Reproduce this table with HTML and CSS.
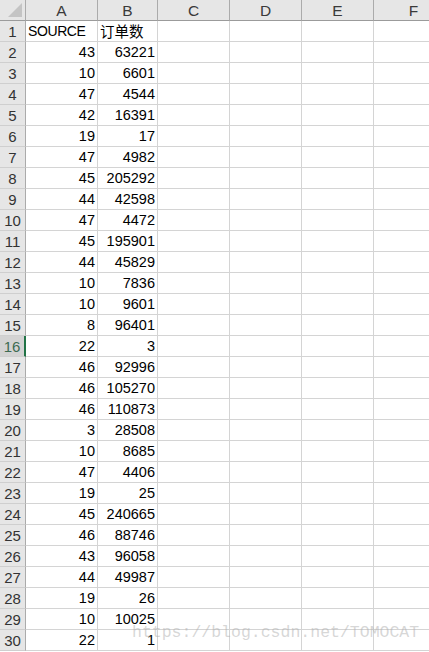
FILE: index.html
```html
<!DOCTYPE html>
<html>
<head>
<meta charset="utf-8">
<link rel="stylesheet" href="styles.css">
</head>
<body>
<div class="sheet">
  <div class="grid">
    <div class="corner"><span class="tri"></span></div>
    <div class="ch">A</div><div class="ch">B</div><div class="ch">C</div><div class="ch">D</div><div class="ch">E</div><div class="ch">F</div>

    <div class="rh">1</div><div class="c caps">SOURCE</div><div class="c cjk">订单数</div><div class="c"></div><div class="c"></div><div class="c"></div><div class="c"></div>
    <div class="rh">2</div><div class="c n">43</div><div class="c n">63221</div><div class="c"></div><div class="c"></div><div class="c"></div><div class="c"></div>
    <div class="rh">3</div><div class="c n">10</div><div class="c n">6601</div><div class="c"></div><div class="c"></div><div class="c"></div><div class="c"></div>
    <div class="rh">4</div><div class="c n">47</div><div class="c n">4544</div><div class="c"></div><div class="c"></div><div class="c"></div><div class="c"></div>
    <div class="rh">5</div><div class="c n">42</div><div class="c n">16391</div><div class="c"></div><div class="c"></div><div class="c"></div><div class="c"></div>
    <div class="rh">6</div><div class="c n">19</div><div class="c n">17</div><div class="c"></div><div class="c"></div><div class="c"></div><div class="c"></div>
    <div class="rh">7</div><div class="c n">47</div><div class="c n">4982</div><div class="c"></div><div class="c"></div><div class="c"></div><div class="c"></div>
    <div class="rh">8</div><div class="c n">45</div><div class="c n">205292</div><div class="c"></div><div class="c"></div><div class="c"></div><div class="c"></div>
    <div class="rh">9</div><div class="c n">44</div><div class="c n">42598</div><div class="c"></div><div class="c"></div><div class="c"></div><div class="c"></div>
    <div class="rh">10</div><div class="c n">47</div><div class="c n">4472</div><div class="c"></div><div class="c"></div><div class="c"></div><div class="c"></div>
    <div class="rh">11</div><div class="c n">45</div><div class="c n">195901</div><div class="c"></div><div class="c"></div><div class="c"></div><div class="c"></div>
    <div class="rh">12</div><div class="c n">44</div><div class="c n">45829</div><div class="c"></div><div class="c"></div><div class="c"></div><div class="c"></div>
    <div class="rh">13</div><div class="c n">10</div><div class="c n">7836</div><div class="c"></div><div class="c"></div><div class="c"></div><div class="c"></div>
    <div class="rh">14</div><div class="c n">10</div><div class="c n">9601</div><div class="c"></div><div class="c"></div><div class="c"></div><div class="c"></div>
    <div class="rh">15</div><div class="c n">8</div><div class="c n">96401</div><div class="c"></div><div class="c"></div><div class="c"></div><div class="c"></div>
    <div class="rh active">16</div><div class="c n">22</div><div class="c n">3</div><div class="c"></div><div class="c"></div><div class="c"></div><div class="c"></div>
    <div class="rh">17</div><div class="c n">46</div><div class="c n">92996</div><div class="c"></div><div class="c"></div><div class="c"></div><div class="c"></div>
    <div class="rh">18</div><div class="c n">46</div><div class="c n">105270</div><div class="c"></div><div class="c"></div><div class="c"></div><div class="c"></div>
    <div class="rh">19</div><div class="c n">46</div><div class="c n">110873</div><div class="c"></div><div class="c"></div><div class="c"></div><div class="c"></div>
    <div class="rh">20</div><div class="c n">3</div><div class="c n">28508</div><div class="c"></div><div class="c"></div><div class="c"></div><div class="c"></div>
    <div class="rh">21</div><div class="c n">10</div><div class="c n">8685</div><div class="c"></div><div class="c"></div><div class="c"></div><div class="c"></div>
    <div class="rh">22</div><div class="c n">47</div><div class="c n">4406</div><div class="c"></div><div class="c"></div><div class="c"></div><div class="c"></div>
    <div class="rh">23</div><div class="c n">19</div><div class="c n">25</div><div class="c"></div><div class="c"></div><div class="c"></div><div class="c"></div>
    <div class="rh">24</div><div class="c n">45</div><div class="c n">240665</div><div class="c"></div><div class="c"></div><div class="c"></div><div class="c"></div>
    <div class="rh">25</div><div class="c n">46</div><div class="c n">88746</div><div class="c"></div><div class="c"></div><div class="c"></div><div class="c"></div>
    <div class="rh">26</div><div class="c n">43</div><div class="c n">96058</div><div class="c"></div><div class="c"></div><div class="c"></div><div class="c"></div>
    <div class="rh">27</div><div class="c n">44</div><div class="c n">49987</div><div class="c"></div><div class="c"></div><div class="c"></div><div class="c"></div>
    <div class="rh">28</div><div class="c n">19</div><div class="c n">26</div><div class="c"></div><div class="c"></div><div class="c"></div><div class="c"></div>
    <div class="rh">29</div><div class="c n">10</div><div class="c n">10025</div><div class="c"></div><div class="c"></div><div class="c"></div><div class="c"></div>
    <div class="rh">30</div><div class="c n">22</div><div class="c n">1</div><div class="c"></div><div class="c"></div><div class="c"></div><div class="c"></div>
  </div>
  <div class="watermark">https://blog.csdn.net/TOMOCAT</div>
</div>
</body>
</html>
```
FILE: styles.css
```css
html, body {
  margin: 0;
  padding: 0;
  background: #ffffff;
  overflow: hidden;
}
.sheet {
  position: relative;
  width: 429px;
  height: 652px;
  overflow: hidden;
  font-family: "Liberation Sans", Arial, sans-serif;
  font-size: 14px;
  color: #000;
}
.grid {
  display: grid;
  grid-template-columns: 26px 72px 60px 72px 72px 72px 80px;
  grid-template-rows: 21px;
  grid-auto-rows: 21px;
}
.corner {
  position: relative;
  background: #e6e6e6;
  border-right: 1px solid #ababab;
  border-bottom: 1px solid #9b9b9b;
}
.tri {
  position: absolute;
  right: 3px;
  bottom: 3px;
  width: 0;
  height: 0;
  border-left: 14px solid transparent;
  border-bottom: 14px solid #c4c4c4;
}
.ch {
  background: #e6e6e6;
  border-right: 1px solid #ababab;
  border-bottom: 1px solid #9b9b9b;
  text-align: center;
  line-height: 21px;
  color: #3a3a3a;
  font-size: 15.5px;
}
.rh {
  background: #e6e6e6;
  border-right: 1px solid #ababab;
  border-bottom: 1px solid #cfcfcf;
  text-align: center;
  line-height: 21px;
  color: #333;
  font-size: 15px;
}
.rh.active {
  background: #d3d3d3;
  color: #3d6b52;
  border-right: 2px solid #217346;
}
.c {
  border-right: 1px solid #d4d4d4;
  border-bottom: 1px solid #d4d4d4;
  line-height: 21px;
  padding: 0 2px;
  white-space: nowrap;
  overflow: hidden;
  font-size: 14.5px;
}
.c.n {
  text-align: right;
}
.c.caps {
  font-size: 14px;
  letter-spacing: -0.4px;
}
.c.cjk {
  font-family: "Noto Sans CJK SC", sans-serif;
  font-size: 14.5px;
  line-height: 20px;
}
.watermark {
  position: absolute;
  left: 132px;
  top: 623px;
  font-family: "Liberation Mono", "Courier New", monospace;
  font-size: 16.5px;
  line-height: 20px;
  color: rgba(175, 175, 175, 0.5);
  white-space: nowrap;
  pointer-events: none;
}
```
